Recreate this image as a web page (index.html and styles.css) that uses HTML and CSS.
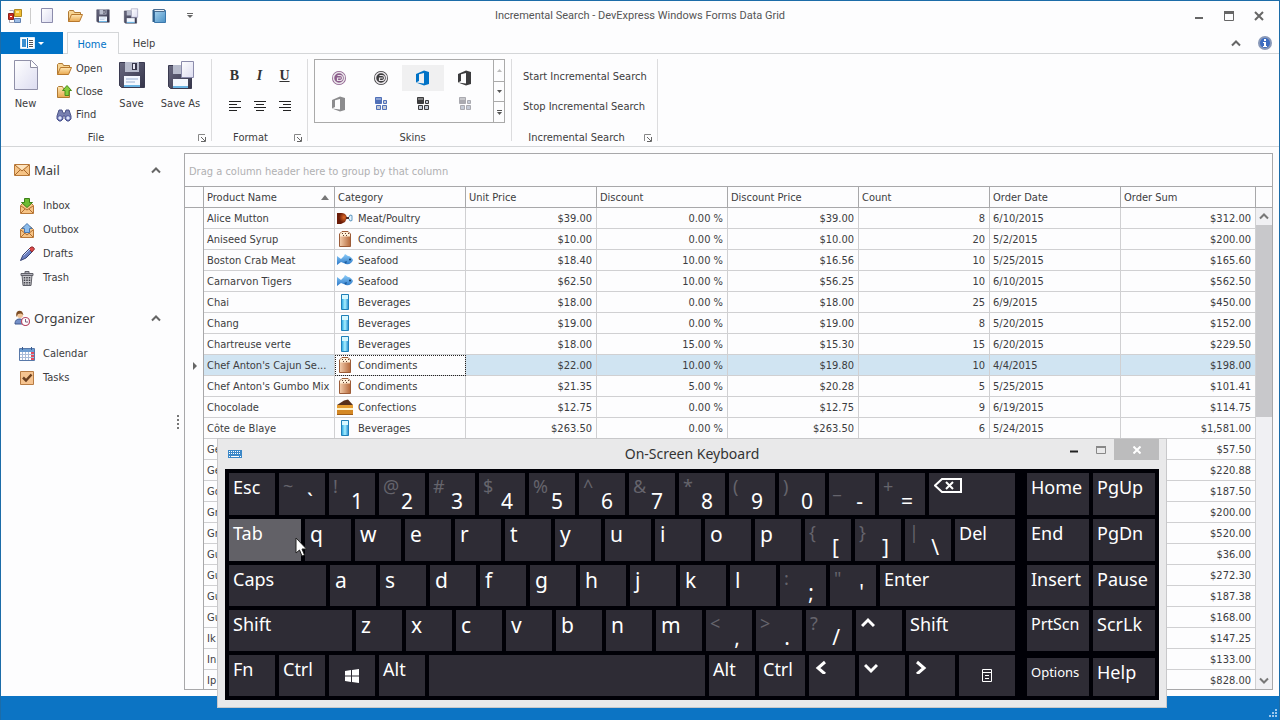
FILE: index.html
```html
<!DOCTYPE html>
<html lang="en">
<head>
  <meta charset="UTF-8" />
  <meta name="viewport" content="width=device-width, initial-scale=1" />
  <title>Incremental Search - DevExpress Windows Forms Data Grid</title>
  <link rel="stylesheet" href="styles.css">
</head>
<body>
  <!-- shared icons -->
  <svg class="sprite" aria-hidden="true">
    <defs>
      <linearGradient id="gPaper" x2="1" y2="1"><stop offset="0" stop-color="#ffffff"/><stop offset="1" stop-color="#dcdcf0"/></linearGradient>
      <linearGradient id="gFolder" x2="0" y2="1"><stop offset="0" stop-color="#ffe7b5"/><stop offset="1" stop-color="#e8a850"/></linearGradient>
      <linearGradient id="gDisk" x2="1" y2="1"><stop offset="0" stop-color="#6a6a80"/><stop offset="1" stop-color="#34344a"/></linearGradient>
      <linearGradient id="gBook" x2="1" y2="1"><stop offset="0" stop-color="#a8d4f0"/><stop offset="1" stop-color="#4a90c4"/></linearGradient>
      <linearGradient id="gGlass"><stop offset="0" stop-color="#1f9fe0"/><stop offset=".5" stop-color="#a8f0ff"/><stop offset="1" stop-color="#2088d0"/></linearGradient>
      <linearGradient id="gSalt"><stop offset="0" stop-color="#f4cfae"/><stop offset="1" stop-color="#b4683a"/></linearGradient>
      <linearGradient id="gFish" x2="0" y2="1"><stop offset="0" stop-color="#8cccf8"/><stop offset="1" stop-color="#2c78c8"/></linearGradient>
      <radialGradient id="gMeat" cx=".7" cy=".4"><stop offset="0" stop-color="#e06a28"/><stop offset="1" stop-color="#6a1c08"/></radialGradient>
    </defs>
    <symbol id="app" viewBox="0 0 16 16">
      <path d="M2.500 2.500h4v3M2.500 12v2.500h5" fill="none" stroke="#a8a8b8"/>
      <path d="M1.500 5.500h5v6h-5z" fill="#c82c20" stroke="#8c2018"/><path d="M3 8h2v1H3z" fill="#fff"/>
      <path d="M7.500 1.500h7v7h-7z" fill="#f0bc30" stroke="#b08820"/><path d="M9 3h3v2H9z" fill="#fbe490"/>
      <path d="M7.500 10.500h6v4h-6z" fill="#9cbce4" stroke="#6080b0"/>
    </symbol>
    <symbol id="page" viewBox="0 0 16 16"><path d="M2.500.500h11v14h-11z" fill="url(#gPaper)" stroke="#8c8cac"/></symbol>
    <symbol id="newpage" viewBox="0 0 26 32"><path d="M1.500 1.500h17l6 6v23h-23z" fill="url(#gPaper)" stroke="#9090a8"/><path d="M17.500 1.500v7h7" fill="#fff" stroke="#8c8ca0"/></symbol>
    <symbol id="folder" viewBox="0 0 16 16">
      <path d="M1.500 13.500v-10l1-1h4l1 2h6v3" fill="#f7d493" stroke="#b07a34"/>
      <path d="M4.500 6.500h11l-3 7h-11z" fill="url(#gFolder)" stroke="#b8782c"/>
    </symbol>
    <symbol id="closefolder" viewBox="0 0 16 16">
      <path d="M1.500 13.500v-10l1-1h4l1 2h6v9z" fill="url(#gFolder)" stroke="#b07a34"/>
      <path d="M11 1.500l4.500 5h-2.500v5H9v-5H6.500z" fill="#86cc3c" stroke="#4a8c1c"/>
    </symbol>
    <symbol id="disk" viewBox="0 0 28 28">
      <path d="M1.500 1.500h25v25h-23l-2-2z" fill="url(#gDisk)" stroke="#3a3a50"/>
      <path d="M7 1h14v10H7z" fill="#b8bccc"/><path d="M14 2h5v7h-5z" fill="#36364a"/><path d="M15 3h2v5h-2z" fill="#e8e8f4"/>
      <path d="M6 15h16v10H6z" fill="#f4f8ff"/><path d="M8 18h12M8 21h9" stroke="#9ab0d0"/><path d="M6 24h16v2H6z" fill="#6ab4e4"/>
    </symbol>
    <symbol id="diskas" viewBox="0 0 28 30">
      <path d="M1.500 5.500h23v23h-21l-2-2z" fill="url(#gDisk)" stroke="#3a3a50"/>
      <path d="M6 5h8v9H6z" fill="#b8bccc"/><path d="M6 19h15v8H6z" fill="#f4f8ff"/><path d="M6 26h15v2H6z" fill="#6ab4e4"/>
      <path d="M14.500 1.500h12v16h-12z" fill="url(#gPaper)" stroke="#8c8cac"/>
    </symbol>
    <symbol id="book" viewBox="0 0 16 16"><path d="M3.500 2.500h11v12h-11z" fill="url(#gBook)" stroke="#3c78ac"/><path d="M2.500 1.500h11v2h-11z" fill="#e8f0f8" stroke="#4a6c90"/><path d="M2.500 2v12" stroke="#30608c" stroke-width="2"/></symbol>
    <symbol id="find" viewBox="0 0 16 16">
      <path d="M3 3h3l1 3h2l1-3h3l2 6v3l-2 2h-2l-2-2v-3H7v3l-2 2H3l-2-2V9z" fill="#7880b0" stroke="#4c5488"/>
      <circle cx="4" cy="11" r="2.300" fill="#dfe6fa" stroke="#5058a0"/><circle cx="12" cy="11" r="2.300" fill="#dfe6fa" stroke="#5058a0"/>
    </symbol>
    <symbol id="launch" viewBox="0 0 8 8"><path d="M.500 7V.500H7" fill="none" stroke="#888"/><path d="M3 3l4 4M7.500 3v4.500H3" fill="none" stroke="#666"/></symbol>
    <symbol id="up" viewBox="0 0 10 8"><path d="M1 6.500l4-4 4 4" fill="none" stroke="currentColor" stroke-width="2"/></symbol>
    <symbol id="skinround" viewBox="0 0 16 16"><circle cx="8" cy="8" r="7" fill="currentColor"/><circle cx="8" cy="8" r="5.500" fill="none" stroke="#e8e4e8" stroke-width="1.500"/><path d="M6.500 5.500h2.500a2.500 2.500 0 0 1 0 5H6.500V8H10" fill="none" stroke="#e8e4e8" stroke-width="1.200"/></symbol>
    <symbol id="office" viewBox="0 0 16 16"><path d="M1 4l8-3.500 5 1.500v12l-5 1.500L1 12.500l8 1V3L4 4.200V11l-3 1.500z" fill="currentColor"/></symbol>
    <symbol id="blocks" viewBox="0 0 16 16">
      <path d="M2.500 1.500h6v6h-6z" fill="currentColor" stroke="currentColor"/><path d="M3 2h5v2H3z" fill="#fff" opacity=".35"/>
      <path d="M10.500 4.500h3v3h-3zM3.500 9.500h4v4h-4zM9.500 9.500h4v4h-4z" fill="#c4cad6" stroke="currentColor"/>
    </symbol>
    <symbol id="mail" viewBox="0 0 16 16"><path d="M.500 2.500h15v11H.500z" fill="#f6c486" stroke="#b87838"/><path d="M1 3l7 6 7-6M1 13l5-5M15 13l-5-5" fill="none" stroke="#a8682c"/><path d="M2 3h12L8 8z" fill="#fde4c0"/></symbol>
    <symbol id="inboxicon" viewBox="0 0 16 16"><path d="M1.500 7.500L4 5h8l2.500 2.500v8h-13z" fill="#f6c486" stroke="#b87838"/><path d="M2 8l6 4 6-4M2 15l4-4M14 15l-4-4" fill="none" stroke="#b06c30"/><path d="M5.500.500h5v4h3L8 9.500 2.500 4.500h3z" fill="#6cbc34" stroke="#3c8018"/></symbol>
    <symbol id="outboxicon" viewBox="0 0 16 16"><path d="M1.500 7.500L4 5h8l2.500 2.500v8h-13z" fill="#f6c486" stroke="#b87838"/><path d="M2 15l4-4M14 15l-4-4M2 8l6 5 6-5" fill="none" stroke="#b06c30"/><path d="M8 1.500l5 5h-2.500v4h-5v-4H3z" fill="#8cbcec" stroke="#4878b0"/></symbol>
    <symbol id="pencil" viewBox="0 0 16 16"><path d="M1.500 14.500L4 9l7-7 3 3-7 7z" fill="#6c80c0" stroke="#384474"/><path d="M10 3l2-2h2l1.500 2-2.500 3z" fill="#dc4848" stroke="#8c2c30"/><path d="M4.500 9.500L11 3" stroke="#c8d4f4"/></symbol>
    <symbol id="bin" viewBox="0 0 16 16"><path d="M3 5h10l-1 10.500H4z" fill="#c8c8cc" stroke="#606068"/><path d="M2 3.500h12v2H2zM6 1.500h4v2H6z" fill="#b0b0b8" stroke="#606068"/><path d="M5.500 7v8M8 7v8M10.500 7v8" stroke="#404048" stroke-width="1.500" stroke-dasharray="1.500 1"/></symbol>
    <symbol id="organizer" viewBox="0 0 16 16"><path d="M1 14c0-4 2-5 5-5l4 1v4z" fill="#7490c8" stroke="#40588c"/><circle cx="6" cy="5" r="3" fill="#f0c498"/><path d="M2.500 7C1 1 5-.500 8 1.500L9.500 5 7 3.500 4 4z" fill="#7c4c24"/><circle cx="11.500" cy="11.500" r="4" fill="#fff" stroke="#b84c68" stroke-width="1.200"/><path d="M11.500 9v3H14" fill="none" stroke="#806080"/></symbol>
    <symbol id="month" viewBox="0 0 16 16"><path d="M.500 2.500h15v12H.500z" fill="#fff" stroke="#5878a8"/><path d="M1 3h14v3H1z" fill="#6c9cd0"/><path d="M12 6h3v8h-3z" fill="#e44c5c"/><path d="M3.500 6v8M6.500 6v8M9.500 6v8M1 8.500h14M1 11.500h14" stroke="#a8bcd8"/><path d="M3.500 1v3M12.500 1v3" stroke="#385c90"/></symbol>
    <symbol id="task" viewBox="0 0 16 16"><path d="M1.500 1.500h13v13h-13z" fill="#f6c490" stroke="#b87c44"/><path d="M4 7.500l3 3L12.500 4.500" fill="none" stroke="#6c4020" stroke-width="2.500"/></symbol>
    <symbol id="meat" viewBox="0 0 16 16"><path d="M0 3h5c3 0 5 3 5 5l-2 4-4 2H0z" fill="url(#gMeat)"/><path d="M9 7h4v2H9z" fill="#50302c"/><path d="M12 7l1-2 2 .500v5L13 11l-1-2" fill="#e4f4ff" stroke="#6098c0"/></symbol>
    <symbol id="salt" viewBox="0 0 16 16"><path d="M2.500 15.500V3L5 .500h6L13.500 3v12.500z" fill="url(#gSalt)" stroke="#9c5c38"/><path d="M3 5.500V3l2-2h6l2 2v2.500z" fill="#fff0d8"/><path d="M5 2.500h1M8 2.500h1M11 2.500h1M6 4.500h1M9 4.500h1" stroke="#604030"/></symbol>
    <symbol id="fish" viewBox="0 0 16 16"><path d="M0 4l4 3 3-3 1-2 3 2c2 0 4 2 5 4-1 3-4 5-7 4l-5-2-4 3z" fill="url(#gFish)"/><path d="M7 10l3-1-1 3z" fill="#1c5c9c"/><circle cx="13" cy="7.500" r="1" fill="#103860"/></symbol>
    <symbol id="glass" viewBox="0 0 16 16"><path d="M4.500.500h7v15h-7z" fill="url(#gGlass)" stroke="#2080b8"/><path d="M5 1h6v4H5z" fill="#d8f8ff"/></symbol>
    <symbol id="cake" viewBox="0 0 16 16"><path d="M0 6l7-4.500 4-1L16 6z" fill="#56301c"/><path d="M0 6h16v3H0z" fill="#e49c30"/><path d="M0 9h16v2H0z" fill="#fff0c4"/><path d="M0 11h16v4.500H0z" fill="#d48824"/><path d="M0 15h16v1H0z" fill="#a05c14"/></symbol>
  </svg>

  <header class="titlebar">
    <div class="quick">
      <svg class="i16"><use href="#app"/></svg>
      <span class="bar"></span>
      <button aria-label="New"><svg class="i16"><use href="#page"/></svg></button>
      <button aria-label="Open"><svg class="i16"><use href="#folder"/></svg></button>
      <button aria-label="Save"><svg class="i14"><use href="#disk"/></svg></button>
      <button aria-label="Save As"><svg class="i16"><use href="#diskas"/></svg></button>
      <button aria-label="Book"><svg class="i16"><use href="#book"/></svg></button>
      <button aria-label="Customize"><svg width="6" height="6"><path d="M0 .500h6" stroke="#666"/><path d="M0 2h6L3 5z" fill="#666"/></svg></button>
    </div>
    <h1>Incremental Search - DevExpress Windows Forms Data Grid</h1>
    <div class="winbuttons">
      <button aria-label="Minimize"><svg width="10" height="10"><path d="M1 7h8" stroke="#666" stroke-width="2"/></svg></button>
      <button aria-label="Maximize"><svg width="10" height="10"><path d="M.500.500h9v9h-9z" fill="none" stroke="#666"/><path d="M0 1.500h10" stroke="#666" stroke-width="3"/></svg></button>
      <button aria-label="Close"><svg width="10" height="10"><path d="M1 1l8 8M9 1l-8 8" stroke="#666" stroke-width="2"/></svg></button>
    </div>
  </header>

  <nav class="tabs">
    <button class="appmenu" aria-label="File menu">
      <svg width="24" height="12"><path d="M.500.500h14v11H.500z" fill="#fff" stroke="#dceefa"/><path d="M7.500 1v10" stroke="#0072c6"/><path d="M9 3.500h4M9 5.500h4M9 7.500h4M9 9.500h4" stroke="#555"/><path d="M2 2h4v8H2z" fill="#3c90d0"/><path d="M18 5h6l-3 3z" fill="#fff"/></svg>
    </button>
    <button class="tab active">Home</button>
    <button class="tab">Help</button>
    <div class="tabright">
      <svg width="10" height="8"><use href="#up"/></svg>
      <svg width="14" height="14" viewBox="0 0 14 14"><circle cx="7" cy="7" r="6" fill="#3c6cc0" stroke="#8898b8" stroke-width="2"/><path d="M5 6h3v4h1v1H5v-1h1V7H5zM6 3h2v2H6z" fill="#fff"/></svg>
    </div>
  </nav>

  <section class="ribbon">
    <div class="group file">
      <div class="tools">
        <button class="big"><svg width="26" height="32"><use href="#newpage"/></svg>New</button>
        <div class="stack">
          <button><svg class="i16"><use href="#folder"/></svg>Open</button>
          <button><svg class="i16"><use href="#closefolder"/></svg>Close</button>
          <button><svg class="i16"><use href="#find"/></svg>Find</button>
        </div>
        <button class="big"><svg width="28" height="32"><use href="#disk"/></svg>Save</button>
        <button class="big"><svg width="28" height="32"><use href="#diskas"/></svg>Save As</button>
      </div>
      <div class="caption">File<svg class="launch"><use href="#launch"/></svg></div>
    </div>
    <div class="group format">
      <div class="tools">
        <button class="b">B</button><button class="i">I</button><button class="u">U</button>
        <button aria-label="Left"><svg width="12" height="12"><path d="M0 1.500h12M0 4.500h8M0 7.500h12M0 10.500h8" stroke="#222"/></svg></button>
        <button aria-label="Center"><svg width="12" height="12"><path d="M0 1.500h12M2 4.500h8M0 7.500h12M2 10.500h8" stroke="#222"/></svg></button>
        <button aria-label="Right"><svg width="12" height="12"><path d="M0 1.500h12M4 4.500h8M0 7.500h12M4 10.500h8" stroke="#222"/></svg></button>
      </div>
      <div class="caption">Format<svg class="launch"><use href="#launch"/></svg></div>
    </div>
    <div class="group skins">
      <div class="tools">
        <div class="gallery">
          <button class="purple" aria-label="Skin 1"><svg class="i16"><use href="#skinround"/></svg></button>
          <button class="dark" aria-label="Skin 2"><svg class="i16"><use href="#skinround"/></svg></button>
          <button class="blue selected" aria-label="Skin 3"><svg class="i16"><use href="#office"/></svg></button>
          <button class="dark" aria-label="Skin 4"><svg class="i16"><use href="#office"/></svg></button>
          <button class="gray" aria-label="Skin 5"><svg class="i16"><use href="#office"/></svg></button>
          <button class="steel" aria-label="Skin 6"><svg class="i16"><use href="#blocks"/></svg></button>
          <button class="dark" aria-label="Skin 7"><svg class="i16"><use href="#blocks"/></svg></button>
          <button class="silver" aria-label="Skin 8"><svg class="i16"><use href="#blocks"/></svg></button>
        </div>
        <div class="gallerybar">
          <button aria-label="Up"><svg width="5" height="3"><path d="M0 3h5L2.500 0z" fill="#bbb"/></svg></button>
          <button aria-label="Down"><svg width="5" height="3"><path d="M0 0h5L2.500 3z" fill="#555"/></svg></button>
          <button aria-label="More"><svg width="5" height="5"><path d="M0 .500h5" stroke="#555"/><path d="M0 2h5L2.500 5z" fill="#555"/></svg></button>
        </div>
      </div>
      <div class="caption">Skins</div>
    </div>
    <div class="group search">
      <div class="tools">
        <button>Start Incremental Search</button>
        <button>Stop Incremental Search</button>
      </div>
      <div class="caption">Incremental Search<svg class="launch"><use href="#launch"/></svg></div>
    </div>
  </section>

  <main>
    <aside class="sidebar">
      <h2><svg class="i16"><use href="#mail"/></svg>Mail<svg class="chev"><use href="#up"/></svg></h2>
      <ul>
        <li><a href="#inbox"><svg class="i16"><use href="#inboxicon"/></svg>Inbox</a></li>
        <li><a href="#outbox"><svg class="i16"><use href="#outboxicon"/></svg>Outbox</a></li>
        <li><a href="#drafts"><svg class="i16"><use href="#pencil"/></svg>Drafts</a></li>
        <li><a href="#trash"><svg class="i16"><use href="#bin"/></svg>Trash</a></li>
      </ul>
      <h2><svg class="i16"><use href="#organizer"/></svg>Organizer<svg class="chev"><use href="#up"/></svg></h2>
      <ul>
        <li><a href="#calendar"><svg class="i16"><use href="#month"/></svg>Calendar</a></li>
        <li><a href="#tasks"><svg class="i16"><use href="#task"/></svg>Tasks</a></li>
      </ul>
      <span class="splitter"></span>
    </aside>

    <section class="grid">
      <div class="grouppanel">Drag a column header here to group by that column</div>
      <div class="gridbody">
        <table>
          <colgroup><col class="cind"><col><col><col><col><col><col><col><col class="csum"></colgroup>
          <thead>
            <tr><th></th><th>Product Name<svg class="sort" width="8" height="5"><path d="M0 5h8L4 0z" fill="#777"/></svg></th><th>Category</th><th>Unit Price</th><th>Discount</th><th>Discount Price</th><th>Count</th><th>Order Date</th><th>Order Sum</th></tr>
          </thead>
          <tbody>
            <tr><td></td><td>Alice Mutton</td><td><svg class="i16"><use href="#meat"/></svg>Meat/Poultry</td><td>$39.00</td><td>0.00 %</td><td>$39.00</td><td>8</td><td>6/10/2015</td><td>$312.00</td></tr>
            <tr><td></td><td>Aniseed Syrup</td><td><svg class="i16"><use href="#salt"/></svg>Condiments</td><td>$10.00</td><td>0.00 %</td><td>$10.00</td><td>20</td><td>5/2/2015</td><td>$200.00</td></tr>
            <tr><td></td><td>Boston Crab Meat</td><td><svg class="i16"><use href="#fish"/></svg>Seafood</td><td>$18.40</td><td>10.00 %</td><td>$16.56</td><td>10</td><td>5/25/2015</td><td>$165.60</td></tr>
            <tr><td></td><td>Carnarvon Tigers</td><td><svg class="i16"><use href="#fish"/></svg>Seafood</td><td>$62.50</td><td>10.00 %</td><td>$56.25</td><td>10</td><td>6/10/2015</td><td>$562.50</td></tr>
            <tr><td></td><td>Chai</td><td><svg class="i16"><use href="#glass"/></svg>Beverages</td><td>$18.00</td><td>0.00 %</td><td>$18.00</td><td>25</td><td>6/9/2015</td><td>$450.00</td></tr>
            <tr><td></td><td>Chang</td><td><svg class="i16"><use href="#glass"/></svg>Beverages</td><td>$19.00</td><td>0.00 %</td><td>$19.00</td><td>8</td><td>5/20/2015</td><td>$152.00</td></tr>
            <tr><td></td><td>Chartreuse verte</td><td><svg class="i16"><use href="#glass"/></svg>Beverages</td><td>$18.00</td><td>15.00 %</td><td>$15.30</td><td>15</td><td>6/20/2015</td><td>$229.50</td></tr>
            <tr class="current"><td><svg width="4" height="8"><path d="M0 0l4 4-4 4z" fill="#666"/></svg></td><td>Chef Anton's Cajun Se...</td><td class="focused"><svg class="i16"><use href="#salt"/></svg>Condiments</td><td>$22.00</td><td>10.00 %</td><td>$19.80</td><td>10</td><td>4/4/2015</td><td>$198.00</td></tr>
            <tr><td></td><td>Chef Anton's Gumbo Mix</td><td><svg class="i16"><use href="#salt"/></svg>Condiments</td><td>$21.35</td><td>5.00 %</td><td>$20.28</td><td>5</td><td>5/25/2015</td><td>$101.41</td></tr>
            <tr><td></td><td>Chocolade</td><td><svg class="i16"><use href="#cake"/></svg>Confections</td><td>$12.75</td><td>0.00 %</td><td>$12.75</td><td>9</td><td>6/19/2015</td><td>$114.75</td></tr>
            <tr><td></td><td>Côte de Blaye</td><td><svg class="i16"><use href="#glass"/></svg>Beverages</td><td>$263.50</td><td>0.00 %</td><td>$263.50</td><td>6</td><td>5/24/2015</td><td>$1,581.00</td></tr>
            <tr><td></td><td>Ge</td><td></td><td></td><td></td><td></td><td></td><td></td><td>$57.50</td></tr>
            <tr><td></td><td>Ge</td><td></td><td></td><td></td><td></td><td></td><td></td><td>$220.88</td></tr>
            <tr><td></td><td>Go</td><td></td><td></td><td></td><td></td><td></td><td></td><td>$187.50</td></tr>
            <tr><td></td><td>Gr</td><td></td><td></td><td></td><td></td><td></td><td></td><td>$200.00</td></tr>
            <tr><td></td><td>Gr</td><td></td><td></td><td></td><td></td><td></td><td></td><td>$520.00</td></tr>
            <tr><td></td><td>Gu</td><td></td><td></td><td></td><td></td><td></td><td></td><td>$36.00</td></tr>
            <tr><td></td><td>Gu</td><td></td><td></td><td></td><td></td><td></td><td></td><td>$272.30</td></tr>
            <tr><td></td><td>Gu</td><td></td><td></td><td></td><td></td><td></td><td></td><td>$187.38</td></tr>
            <tr><td></td><td>Gu</td><td></td><td></td><td></td><td></td><td></td><td></td><td>$168.00</td></tr>
            <tr><td></td><td>Ik</td><td></td><td></td><td></td><td></td><td></td><td></td><td>$147.25</td></tr>
            <tr><td></td><td>In</td><td></td><td></td><td></td><td></td><td></td><td></td><td>$133.00</td></tr>
            <tr><td></td><td>Ip</td><td></td><td></td><td></td><td></td><td></td><td></td><td>$828.00</td></tr>
          </tbody>
        </table>
        <div class="scroll">
          <div class="corner"></div>
          <button aria-label="Scroll up"><svg width="10" height="8"><use href="#up"/></svg></button>
          <div class="thumb"></div>
          <button class="down" aria-label="Scroll down"><svg width="10" height="8"><use href="#up"/></svg></button>
        </div>
      </div>
    </section>
  </main>

  <footer class="statusbar">
    <svg width="8" height="8"><path d="M6 0h2v2H6zM3 3h2v2H3zM6 3h2v2H6zM0 6h2v2H0zM3 6h2v2H3zM6 6h2v2H6z" fill="#9cc8ec"/></svg>
  </footer>

  <section class="osk">
    <div class="osktitle">
      <svg width="14" height="8"><path d="M0 0h14v8H0z" fill="#3c88c8"/><path d="M1 1.500h12M1 3.500h12" stroke="#fff" stroke-dasharray="1 1"/><path d="M1 6.500h1M3 6.500h8M12 6.500h1" stroke="#fff"/></svg>
      <h2>On-Screen Keyboard</h2>
      <div class="oskbuttons">
        <button aria-label="Minimize"><svg width="8" height="8"><path d="M0 5.500h8" stroke="#222" stroke-width="2"/></svg></button>
        <button aria-label="Maximize"><svg width="10" height="8"><path d="M.500.500h9v7h-9z" fill="none" stroke="#888"/><path d="M0 1h10" stroke="#888" stroke-width="2"/></svg></button>
        <button class="x" aria-label="Close"><svg width="8" height="8"><path d="M.500.500l7 7M7.500.500l-7 7" stroke="#fff" stroke-width="2"/></svg></button>
      </div>
    </div>
    <div class="keys">
      <div class="rows">
        <div class="row">
          <button class="word">Esc</button>
          <button class="dual"><sup>~</sup><b>`</b></button><button class="dual"><sup>!</sup><b>1</b></button><button class="dual"><sup>@</sup><b>2</b></button><button class="dual"><sup>#</sup><b>3</b></button><button class="dual"><sup>$</sup><b>4</b></button><button class="dual"><sup>%</sup><b>5</b></button><button class="dual"><sup>^</sup><b>6</b></button><button class="dual"><sup>&amp;</sup><b>7</b></button><button class="dual"><sup>*</sup><b>8</b></button><button class="dual"><sup>(</sup><b>9</b></button><button class="dual"><sup>)</sup><b>0</b></button><button class="dual"><sup>_</sup><b>-</b></button><button class="dual"><sup>+</sup><b>=</b></button>
          <button class="word fill" aria-label="Backspace"><svg class="glyph" width="28" height="15"><path d="M8 1h19v13H8L1 7.500z" fill="none" stroke="#fff" stroke-width="2"/><path d="M12 4l7 7M19 4l-7 7" stroke="#fff" stroke-width="2"/></svg></button>
        </div>
        <div class="row">
          <button class="word tabkey">Tab</button>
          <button>q</button><button>w</button><button>e</button><button>r</button><button>t</button><button>y</button><button>u</button><button>i</button><button>o</button><button>p</button>
          <button class="dual"><sup>{</sup><b>[</b></button><button class="dual"><sup>}</sup><b>]</b></button><button class="dual"><sup>|</sup><b>\</b></button>
          <button class="word fill">Del</button>
        </div>
        <div class="row">
          <button class="word capskey">Caps</button>
          <button>a</button><button>s</button><button>d</button><button>f</button><button>g</button><button>h</button><button>j</button><button>k</button><button>l</button>
          <button class="dual"><sup>:</sup><b>;</b></button><button class="dual"><sup>"</sup><b>'</b></button>
          <button class="word fill">Enter</button>
        </div>
        <div class="row">
          <button class="word shiftkey">Shift</button>
          <button>z</button><button>x</button><button>c</button><button>v</button><button>b</button><button>n</button><button>m</button>
          <button class="dual"><sup>&lt;</sup><b>,</b></button><button class="dual"><sup>&gt;</sup><b>.</b></button><button class="dual"><sup>?</sup><b>/</b></button>
          <button class="word" aria-label="Arrow up"><svg class="glyph" width="14" height="14"><path d="M1 11l6-6 6 6" fill="none" stroke="#fff" stroke-width="3"/></svg></button>
          <button class="word fill">Shift</button>
        </div>
        <div class="row">
          <button class="word">Fn</button><button class="word">Ctrl</button>
          <button class="mid" aria-label="Windows"><svg width="14" height="14"><path d="M0 2l6-1v5.500H0zM7 1l7-1v6.500H7zM0 7.500h6V13l-6-1zM7 7.500h7V14l-7-1z" fill="#fff"/></svg></button>
          <button class="word">Alt</button>
          <button class="fill" aria-label="Space"></button>
          <button class="word">Alt</button><button class="word">Ctrl</button>
          <button class="word" aria-label="Arrow left"><svg class="glyph" width="14" height="14"><path d="M11 2L4 8l7 6" fill="none" stroke="#fff" stroke-width="3"/></svg></button>
          <button class="word" aria-label="Arrow down"><svg class="glyph" width="14" height="14"><path d="M1 5l6 6 6-6" fill="none" stroke="#fff" stroke-width="3"/></svg></button>
          <button class="word" aria-label="Arrow right"><svg class="glyph" width="14" height="14"><path d="M3 2l7 6-7 6" fill="none" stroke="#fff" stroke-width="3"/></svg></button>
          <button class="mid menukey" aria-label="Menu"><svg width="10" height="13"><path d="M.500.500h9v12h-9zM0 3.500h10M3 6.500h4M3 9.500h4" fill="none" stroke="#fff"/></svg></button>
        </div>
      </div>
      <div class="navkeys">
        <button class="word">Home</button><button class="word">PgUp</button>
        <button class="word">End</button><button class="word">PgDn</button>
        <button class="word">Insert</button><button class="word">Pause</button>
        <button class="word small">PrtScn</button><button class="word">ScrLk</button>
        <button class="word last tiny">Options</button><button class="word last">Help</button>
      </div>
    </div>
    <svg class="pointer" width="12" height="20"><path d="M1 1v15l3.500-3 2.500 6 2.500-1-2.500-6H11.500z" fill="#fff" stroke="#222"/></svg>
  </section>
</body>
</html>
```
FILE: styles.css
```css
* { box-sizing: border-box; }

body {
  margin: 0;
  height: 100vh;
  display: flex;
  flex-direction: column;
  overflow: hidden;
  border: 1px solid #1c6ca8;
  border-bottom: none;
  background: #fdfdfe;
  color: #3c3c40;
  font-family: "DejaVu Sans Condensed", "Noto Sans", sans-serif;
  font-size: 11px;
  line-height: 14px;
}

.sprite {
  position: absolute;
  width: 0;
  height: 0;
}

button {
  padding: 0;
  border: none;
  background: none;
  color: inherit;
  font: inherit;
}

svg { flex: none; }
.i16 { width: 16px; height: 16px; }
.i14 { width: 14px; height: 14px; margin: 1px; }

/* title bar */
.titlebar {
  height: 31px;
  flex: none;
  display: grid;
  grid-template-columns: 1fr auto 1fr;
  align-items: center;
  padding-bottom: 2px;
}

.quick {
  display: flex;
  align-items: center;
  gap: 12px;
  padding-left: 6px;
}

.quick button { display: flex; }
.quick button:last-child { padding-left: 8px; }

.bar {
  width: 1px;
  height: 16px;
  margin: 0 -4px 0 -5px;
  background: #ccc;
}

h1 {
  margin: 0;
  font: 11px/14px Roboto, sans-serif;
  color: #555;
}

.winbuttons {
  display: flex;
  justify-content: flex-end;
  gap: 20px;
  padding-right: 15px;
}

.winbuttons button { display: flex; }

/* ribbon tabs */
.tabs {
  height: 22px;
  flex: none;
  display: flex;
  box-shadow: inset 0 -1px #d4d6d8;
}

.appmenu {
  width: 62px;
  background: #0072c6;
  display: flex;
  align-items: center;
  justify-content: center;
  margin-right: 4px;
}

.tab {
  width: 52px;
  padding: 2px 2px 0 0;
}

.tab.active {
  color: #0072c6;
  background: #fdfdfe;
  border: 1px solid #d4d6d8;
  border-bottom: none;
}

.tabright {
  margin-left: auto;
  display: flex;
  align-items: center;
  gap: 17px;
  padding-right: 7px;
  color: #666;
}

/* ribbon */
.ribbon {
  height: 93px;
  flex: none;
  display: flex;
  padding: 5px 0;
  border-bottom: 1px solid #d4d6d8;
}

.group {
  display: flex;
  flex-direction: column;
  border-right: 1px solid #dcdcde;
}

.group .tools {
  height: 72px;
  flex: none;
}

.caption {
  position: relative;
  text-align: center;
  padding-right: 20px;
}

.launch {
  position: absolute;
  right: 5px;
  top: 3px;
  width: 8px;
  height: 8px;
}

.file { width: 211px; }
.format { width: 96px; }
.skins { width: 204px; }
.search { width: 146px; }
.format .caption { padding-right: 18px; }
.skins .caption { padding: 0 0 0 6px; }
.search .caption { padding-right: 16px; }

.file .tools { display: flex; }

.big {
  width: 49px;
  display: flex;
  flex-direction: column;
  align-items: center;
  justify-content: flex-start;
  gap: 6px;
  white-space: nowrap;
}

.stack {
  width: 57px;
  margin-top: -2px;
  display: flex;
  flex-direction: column;
}

.stack button {
  height: 23px;
  display: flex;
  align-items: center;
  gap: 4px;
  padding-left: 6px;
}

.format .tools {
  display: grid;
  grid-template-columns: repeat(3, 25px);
  grid-template-rows: 30px 30px;
  justify-content: center;
  padding-top: 2px;
}

.format .tools button {
  display: flex;
  align-items: center;
  justify-content: center;
  font: bold 14px/18px "Liberation Serif", serif;
  color: #333;
}

.format .tools .i { font-style: italic; }
.format .tools .u { text-decoration: underline; }

.skins .tools {
  display: flex;
  padding-left: 6px;
}

.gallery {
  width: 179px;
  height: 64px;
  display: grid;
  grid-template-columns: repeat(4, 42px);
  grid-template-rows: 26px 26px;
  padding: 5px 0 0 3px;
  border: 1px solid #aaa;
  border-right: none;
}

.gallery button {
  display: flex;
  align-items: center;
  justify-content: center;
}

.gallery .selected { background: #f0f0f1; }
.purple { color: #8c5c8c; }
.dark { color: #3c3c3e; }
.blue { color: #0072c6; }
.gray { color: #8c8c8e; }
.steel { color: #5070b8; }
.silver { color: #aaaab0; }

.gallerybar {
  width: 12px;
  height: 64px;
  display: grid;
  grid-template-rows: repeat(3, 1fr);
  border: 1px solid #aaa;
}

.gallerybar button {
  display: flex;
  align-items: center;
  justify-content: center;
}

.gallerybar button + button { border-top: 1px solid #aaa; }

.search .tools {
  display: flex;
  flex-direction: column;
  padding: 3px 0 0 11px;
}

.search .tools button {
  height: 30px;
  text-align: left;
}

/* content */
main {
  flex: 1;
  min-height: 0;
  display: flex;
  padding: 6px 6px 6px 0;
}

.sidebar {
  position: relative;
  width: 183px;
  flex: none;
  padding-left: 13px;
}

.sidebar h2 {
  display: flex;
  align-items: center;
  gap: 4px;
  height: 34px;
  margin: 0;
  font: 13px/18px "Noto Sans", sans-serif;
}

.chev {
  width: 10px;
  height: 8px;
  margin: 0 23px 0 auto;
  color: #666;
}

.sidebar ul {
  list-style: none;
  margin: 0;
  padding: 7px 0 11px 5px;
}

.sidebar a {
  height: 24px;
  display: flex;
  align-items: center;
  gap: 8px;
  color: inherit;
  text-decoration: none;
}

.splitter {
  position: absolute;
  right: 5px;
  top: 262px;
  width: 2px;
  height: 14px;
  background: repeating-linear-gradient(#777 0 2px, transparent 2px 4px);
}

.grid {
  flex: 1;
  min-width: 0;
  display: flex;
  flex-direction: column;
  overflow: hidden;
  border: 1px solid #a8a8aa;
}

.grouppanel {
  height: 33px;
  flex: none;
  padding: 11px 4px 0;
  border-bottom: 1px solid #a8a8aa;
  color: #b0b0b2;
}

.gridbody {
  flex: 1;
  min-height: 0;
  display: flex;
}

table {
  width: calc(100% - 16px);
  flex: none;
  align-self: flex-start;
  table-layout: fixed;
  border-collapse: separate;
  border-spacing: 0;
}

.cind { width: 19px; }
.csum { width: 135px; }

th {
  height: 21px;
  padding: 1px 3px 0;
  border-right: 1px solid #a8a8aa;
  border-bottom: 1px solid #a8a8aa;
  text-align: left;
  font-weight: normal;
}

.sort {
  float: right;
  margin: 4px 2px 0 0;
}

td {
  height: 21px;
  padding: 1px 4px 0 3px;
  border-right: 1px solid #d0d0d2;
  border-bottom: 1px solid #d0d0d2;
  white-space: nowrap;
  overflow: hidden;
  text-align: right;
}

td:first-child {
  border-right-color: #a8a8aa;
  border-bottom: none;
  padding: 0 6px;
}

td:nth-child(2), td:nth-child(3), td:nth-child(8) { text-align: left; }
td:nth-child(3) { padding-left: 2px; }

td svg { vertical-align: middle; }
td .i16 { margin: -2px 5px 0 0; }
td:first-child svg { display: block; margin-left: auto; }

.current td + td { background: #d0e4f2; }

.current .focused {
  background: #fdfdfe;
  outline: 1px dotted #222;
  outline-offset: -1px;
}

.scroll {
  width: 16px;
  display: flex;
  flex-direction: column;
  background: #f0f0f3;
}

.corner {
  height: 21px;
  flex: none;
  background: #fdfdfe;
  border-bottom: 1px solid #a8a8aa;
}

.scroll button {
  height: 17px;
  color: #777;
}

.scroll .down {
  margin-top: auto;
  transform: rotate(180deg);
}

.thumb {
  flex: none;
  height: 192px;
  background: #c8c8cb;
}

.statusbar {
  height: 24px;
  flex: none;
  display: flex;
  align-items: flex-end;
  justify-content: flex-end;
  margin: 0 -1px;
  padding: 3px;
  background: #0c74c4;
}

/* floating on-screen keyboard */
.osk {
  position: absolute;
  left: 217px;
  top: 438px;
  width: 950px;
  padding: 0 7px 7px;
  border: 1px solid #c8c8ca;
  background: #e9e9ea;
  font-family: "Noto Sans", sans-serif;
}

.osktitle {
  height: 30px;
  display: grid;
  grid-template-columns: 1fr auto 1fr;
  align-items: center;
}

.osktitle > svg { margin-left: 3px; }

.osktitle h2 {
  margin: 0;
  font: 14px/20px "Noto Sans", sans-serif;
  color: #333;
}

.oskbuttons {
  display: flex;
  align-self: start;
  justify-content: flex-end;
}

.oskbuttons button {
  width: 27px;
  height: 21px;
  display: flex;
  align-items: center;
  justify-content: center;
}

.oskbuttons .x {
  width: 45px;
  background: #bcbcbd;
}

.keys {
  display: flex;
  gap: 12px;
  padding: 4px;
  background: #000006;
}

.rows, .navkeys {
  display: grid;
  grid-template-rows: 42px 42px 41px 41px 41px;
  gap: 4px;
}

.rows { flex: 1; }
.navkeys { grid-template-columns: 62px 62px; }

.row {
  display: flex;
  gap: 4px;
}

.keys button {
  width: 46px;
  padding: 0 0 0 5px;
  display: flex;
  align-items: flex-start;
  background: #2e2c35;
  color: #fff;
  font-size: 21px;
  line-height: 30px;
}

.keys .word {
  padding-left: 4px;
  font-size: 18px;
  line-height: 28px;
}

.keys .fill { flex: 1; }
.keys .tabkey { width: 72px; background: #626167; }
.keys .capskey { width: 97px; }
.keys .shiftkey { width: 123px; }
.keys .menukey { width: 56px; }
.keys .navkeys button { width: auto; }
.keys .small { font-size: 16px; }
.keys .tiny { font-size: 13px; }
.keys .last { margin-top: 3px; }

.keys .dual {
  justify-content: space-between;
  padding: 0 12px 0 4px;
}

.dual sup {
  font-size: 18px;
  line-height: 26px;
  color: #65646c;
}

.dual b {
  align-self: flex-end;
  font-size: 21px;
  line-height: 28px;
  font-weight: normal;
}

.keys .mid {
  align-items: center;
  justify-content: center;
  padding: 0;
}

.glyph { margin: 5px 0 0 1px; }

.pointer {
  position: absolute;
  left: 77px;
  top: 98px;
}
```
